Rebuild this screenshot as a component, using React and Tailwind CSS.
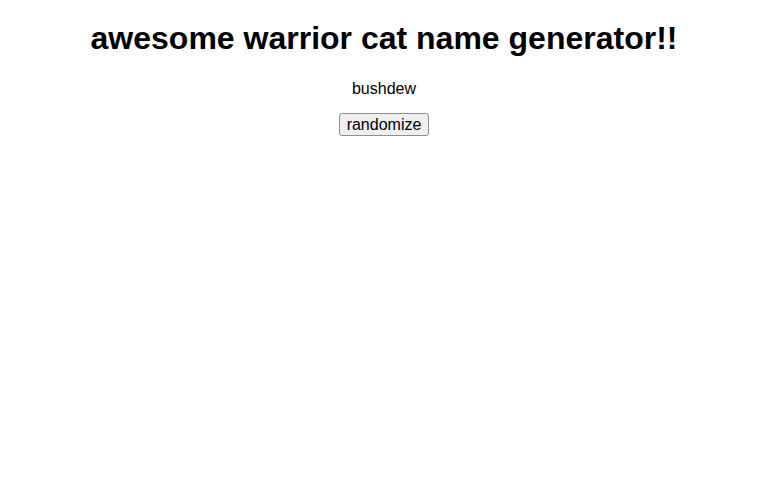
export default function App() {
  return (
    <div className="text-center text-black bg-white" style={{ fontFamily: '"Liberation Sans", Arial, sans-serif' }}>
      <h1 className="pt-[20px] mb-[23px] text-[32px] font-bold leading-[37px]">awesome warrior cat name generator!!</h1>
      <p className="text-base leading-[18px] mb-[15px]">bushdew</p>
      <button className="text-base leading-[19px] px-[7px] py-[1px] bg-[#efefef] border border-[#8f8f8f] rounded-[3px] text-black">randomize</button>
    </div>
  );
}
